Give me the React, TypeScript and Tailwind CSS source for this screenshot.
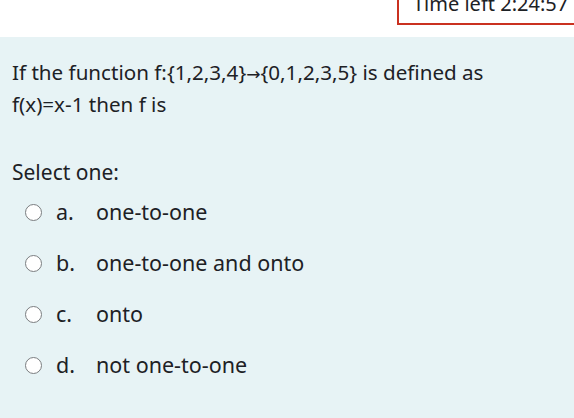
import { useState } from 'react';

const options = [
  { key: 'a', label: 'one-to-one' },
  { key: 'b', label: 'one-to-one and onto' },
  { key: 'c', label: 'onto' },
  { key: 'd', label: 'not one-to-one' },
];

export default function App() {
  const [selected, setSelected] = useState<string | null>(null);

  return (
    <div
      className="w-[574px] h-[418px] overflow-hidden bg-white text-[#1d2125]"
      style={{ fontFamily: '"Noto Sans", "Open Sans", sans-serif' }}
    >
      {/* Timer, scrolled mostly out of view */}
      <div className="h-[37px] flex justify-end items-start">
        <div className="w-[177px] h-[25px] border-2 border-t-0 border-r-0 border-[#ca3120] overflow-hidden flex items-end pl-[14px]">
          <span className="text-[20px] leading-[20px] whitespace-nowrap mb-[9px] text-[#1d2125]">
            Time left 2:24:57
          </span>
        </div>
      </div>

      {/* Question */}
      <div className="bg-[#e7f3f5] h-[381px] px-[12px] pt-[19px]">
        <p className="text-[20.6px] leading-[32px]">
          If the function f:{'{'}1,2,3,4{'}'}
          <span className="font-['DejaVu_Sans',sans-serif] text-[17px] leading-none">→</span>
          {'{'}0,1,2,3,5{'}'} is defined as
          <br />
          f(x)=x-1 then f is
        </p>

        <p className="mt-[36px] text-[21px] leading-[32px]">Select one:</p>

        <div className="mt-[-1px] flex flex-col">
          {options.map((o) => (
            <label
              key={o.key}
              className="h-[51px] flex items-center cursor-pointer"
              onClick={() => setSelected(o.key)}
            >
              <span className="ml-[13px] w-[17px] h-[17px] rounded-full border-[1.5px] border-[#7a7d80] bg-white flex items-center justify-center">
                {selected === o.key && <span className="w-[7px] h-[7px] rounded-full bg-[#0f6cbf]" />}
              </span>
              <span className="ml-[14px] w-[40px] text-[21.5px]">{o.key}.</span>
              <span className="text-[21.5px]">{o.label}</span>
            </label>
          ))}
        </div>
      </div>
    </div>
  );
}
